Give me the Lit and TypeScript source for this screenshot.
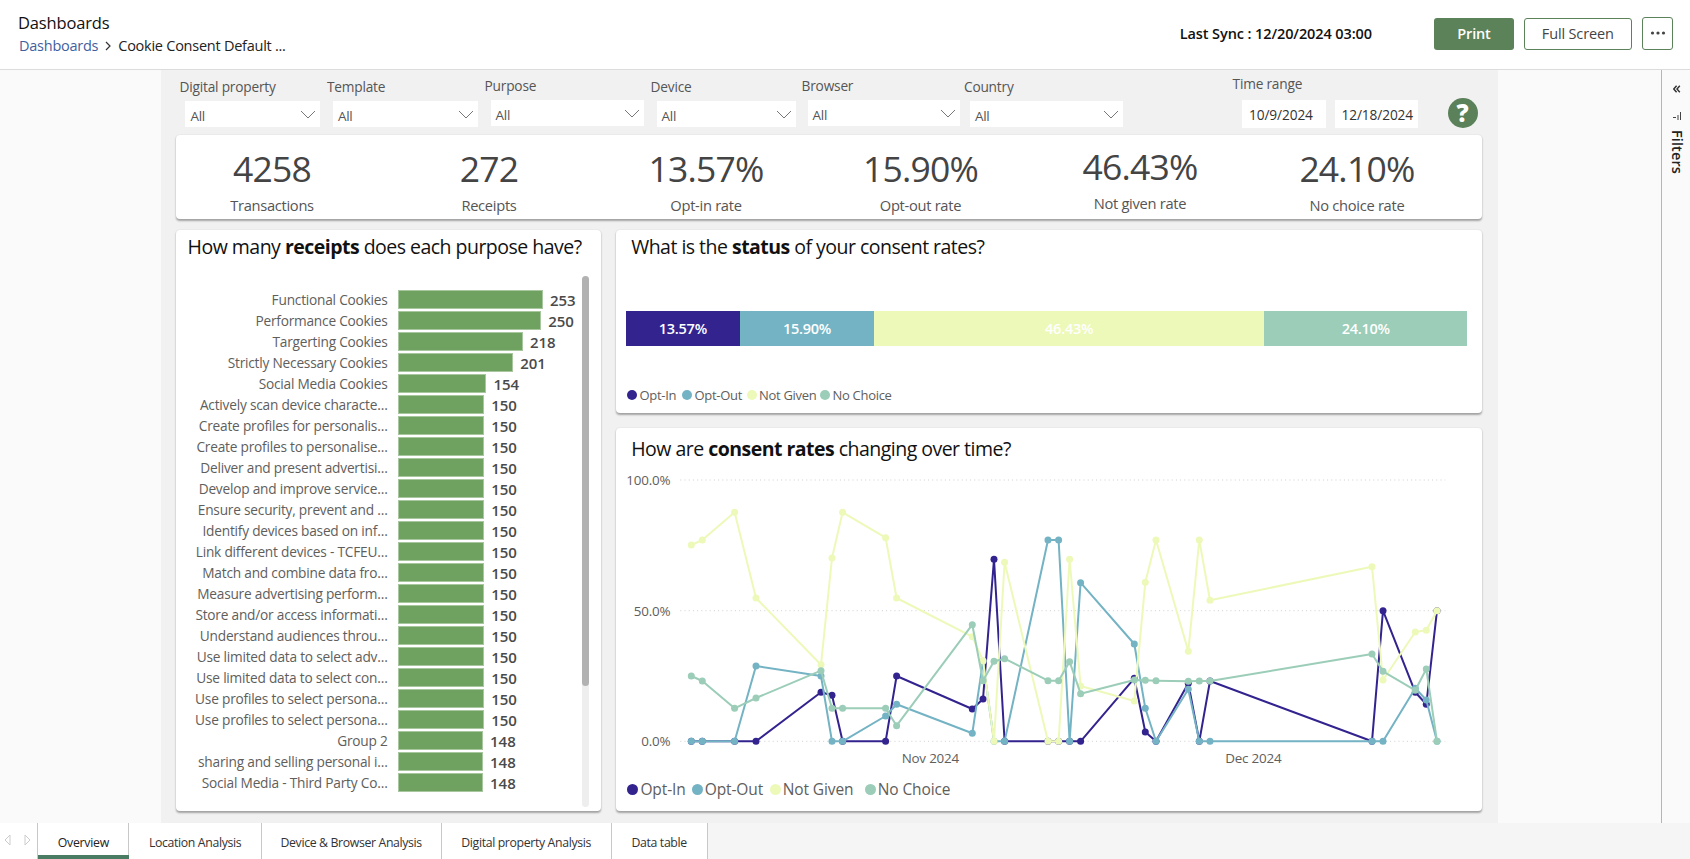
import { LitElement, html, css, svg } from "lit";
import { customElement } from "lit/decorators.js";

const filters = [
  { label: "Digital property", col: 147.5, w: 134.6, up: false },
  { label: "Template", col: 157.6, w: 144.6, up: false },
  { label: "Purpose", col: 166, w: 153, up: true },
  { label: "Device", col: 151, w: 139, up: false },
  { label: "Browser", col: 162.4, w: 152.5, up: true },
  { label: "Country", col: 268.6, w: 153, up: false },
];

const kpis = [
  { v: "4258", l: "Transactions", up: false },
  { v: "272", l: "Receipts", up: false },
  { v: "13.57%", l: "Opt-in rate", up: false },
  { v: "15.90%", l: "Opt-out rate", up: false },
  { v: "46.43%", l: "Not given rate", up: true },
  { v: "24.10%", l: "No choice rate", up: false },
];

const purposes: [string, number][] = [
  ["Functional Cookies", 253],
  ["Performance Cookies", 250],
  ["Targerting Cookies", 218],
  ["Strictly Necessary Cookies", 201],
  ["Social Media Cookies", 154],
  ["Actively scan device characte…", 150],
  ["Create profiles for personalis…", 150],
  ["Create profiles to personalise…", 150],
  ["Deliver and present advertisi…", 150],
  ["Develop and improve service…", 150],
  ["Ensure security, prevent and …", 150],
  ["Identify devices based on inf…", 150],
  ["Link different devices - TCFEU…", 150],
  ["Match and combine data fro…", 150],
  ["Measure advertising perform…", 150],
  ["Store and/or access informati…", 150],
  ["Understand audiences throu…", 150],
  ["Use limited data to select adv…", 150],
  ["Use limited data to select con…", 150],
  ["Use profiles to select persona…", 150],
  ["Use profiles to select persona…", 150],
  ["Group 2", 148],
  ["sharing and selling personal i…", 148],
  ["Social Media - Third Party Co…", 148],
];

const DARK = "#32238f";
const BLUE = "#74b3c4";
const YEL = "#edf9b9";
const GRN = "#9bcdb8";

const status = [
  { t: "13.57%", w: 114.7, c: DARK },
  { t: "15.90%", w: 133.7, c: BLUE },
  { t: "46.43%", w: 390.6, c: YEL },
  { t: "24.10%", w: 202.7, c: GRN },
];

const legend = [
  { t: "Opt-In", c: DARK, w1: 55, w2: 64.3 },
  { t: "Opt-Out", c: BLUE, w1: 64.5, w2: 78 },
  { t: "Not Given", c: YEL, w1: 73.5, w2: 95 },
  { t: "No Choice", c: GRN, w1: 80, w2: 90 },
];

const xs = [691, 702, 734.3, 755.7, 820.7, 831.7, 842.3, 885.3, 896.3, 972, 982.7, 993.7, 1004.3, 1047.7, 1058.3, 1069.3, 1080.3, 1134, 1145, 1155.7, 1188, 1199, 1209.7, 1371.7, 1382.7, 1415, 1426, 1436.7];
const series: { c: string; z: number[] }[] = [
  { c: DARK, z: [844, 844, 844, 844, 697, 706, 844, 844, 648, 747, 717, 298, 844, 844, 844, 844, 844, 655, 816, 844, 670, 844, 663, 844, 452, 697, 733, 452] },
  { c: BLUE, z: [844, 844, 844, 618, 648, 844, 844, 768, 733, 820, 604, 844, 844, 240, 240, 844, 368, 552, 745, 844, 688, 844, 844, 844, 844, 685, 720, 844] },
  { c: YEL, z: [255, 240, 157, 414, 614, 294, 157, 233, 414, 530, 602, 844, 307, 844, 844, 298, 678, 723, 367, 240, 574, 240, 421, 320, 660, 516, 511, 452] },
  { c: GRN, z: [648, 663, 745, 714, 632, 745, 745, 745, 797, 494, 662, 604, 596, 662, 662, 605, 701, 660, 661, 662, 664, 663, 663, 582, 634, 691, 627, 844] },
];
const yOf = (z: number) => 460 + z / 3;

const tabs = ["Overview", "Location Analysis", "Device & Browser Analysis", "Digital property Analysis", "Data table"];
const tabW = [92.1, 132.4, 179.8, 170.1, 96];

@customElement("app-root")
export class AppRoot extends LitElement {
  static styles = css`
    :host {
      display: flex;
      flex-direction: column;
      width: 1690px;
      height: 859px;
      overflow: hidden;
      background: #fafafa;
      font-family: "Open Sans", "Noto Sans", sans-serif;
      color: #252423;
      letter-spacing: -0.3px;
    }
    header {
      flex: 0 0 70px;
      box-sizing: border-box;
      height: 70px;
      background: #fff;
      border-bottom: 1.5px solid #dcdcdc;
      display: flex;
      align-items: flex-start;
      padding: 0 17px 0 18px;
    }
    .crumbs { padding-top: 12px; flex: 1; }
    .h-title { font-size: 16.5px; line-height: 22px; font-weight: 500; color: #111; letter-spacing: -0.15px; }
    .trail { display: flex; align-items: center; font-size: 14.5px; line-height: 22px; margin-top: 1px; color: #222; padding-left: 1px; letter-spacing: -0.25px; }
    .trail a { color: #3f5f9e; font-weight: 500; }
    .trail svg { margin: 0 7px 0 7px; }
    .sync { font-size: 14.5px; font-weight: 600; color: #111; line-height: 20px; margin: 24px 62px 0 0; letter-spacing: -0.1px; }
    .btn { box-sizing: border-box; height: 32px; border-radius: 3px; display: flex; align-items: center; justify-content: center; font-size: 14.5px; margin-top: 18px; padding-bottom: 2px; letter-spacing: -0.15px; }
    .print { width: 80px; background: #5b8259; color: #fff; font-weight: 600; margin-right: 10px; }
    .full { width: 107.5px; border: 1px solid #5b8259; color: #444; background: #fff; font-weight: 500; margin-right: 10.5px; }
    .more { width: 31px; height: 33px; margin-top: 17px; border: 1px solid #5b8259; background: #fff; }
    .body { flex: 1; display: flex; min-height: 0; }
    .gutter { flex: 0 0 161px; }
    .content { flex: 0 0 1337px; background: #f1f1f1; box-sizing: border-box; padding-left: 15.3px; }
    .pane { margin-left: 162.5px; flex: 1; border-left: 1px solid #b5b5b5; background: #fafafa; display: flex; flex-direction: column; align-items: center; padding: 15px 0 0 2px; box-sizing: border-box; }
    .pane svg { display: block; }
    .pane .ftxt { writing-mode: vertical-rl; font-size: 14.5px; font-weight: 600; color: #222; margin-top: 9px; letter-spacing: 0.1px; line-height: 16px; }
    .pane .fi { margin-top: 18px; }
    .frow { height: 65px; display: flex; margin-left: 3.2px; align-items: flex-start; }
    .f { display: flex; flex-direction: column; padding-top: 7px; box-sizing: border-box; flex: none; }
    .f.up { padding-top: 6px; }
    .f label { font-size: 13.7px; line-height: 20px; color: #555; letter-spacing: -0.2px; }
    .dd { box-sizing: border-box; height: 26px; margin: 4px 0 0 6px; background: #fff; font-size: 13.5px; color: #555; display: flex; align-items: center; justify-content: space-between; padding: 3px 4px 0 5px; }
    .dd svg { margin-top: -3px; }
    .time { margin-left: 0; padding-top: 2px; flex: none; }
    .time label { font-size: 13.7px; line-height: 20px; color: #555; letter-spacing: -0.2px; }
    .dates { display: flex; gap: 9px; margin: 6px 0 0 9.5px; }
    .date { box-sizing: border-box; width: 83.5px; height: 28px; background: #fff; display: flex; align-items: center; padding-left: 7px; font-size: 13.7px; color: #333; letter-spacing: -0.12px; }
    .help { flex: none; width: 30px; height: 30px; border-radius: 50%; background: #5a8159; color: #fff; font-weight: 800; font-size: 24px; line-height: 30px; text-align: center; margin: 28px 0 0 29.5px; letter-spacing: 0; }
    .card { background: #fff; border-radius: 4px; box-shadow: 0 1.5px 2px rgba(0,0,0,.32), 0 0 2px rgba(0,0,0,.05); box-sizing: border-box; }
    .kpi { width: 1305.5px; height: 84px; display: grid; grid-template-columns: repeat(6, 191.4px); column-gap: 25.6px; }
    .k { display: flex; flex-direction: column; align-items: center; padding-top: 10px; }
    .k.up { padding-top: 8px; }
    .k:nth-child(4) { margin-left: -5px; }
    .k .v { font-size: 35.5px; line-height: 46px; color: #444; letter-spacing: -0.8px; }
    .k .l { font-size: 14.7px; line-height: 20px; color: #555; margin-top: 4px; }
    .charts { display: grid; grid-template-columns: 425px 866px; column-gap: 14.6px; margin-top: 11px; }
    .left { height: 581px; position: relative; padding: 0 0 0 11.3px; }
    .ttl { font-size: 19.5px; line-height: 26px; color: #111; letter-spacing: -0.52px; }
    .ttl b { font-weight: 700; }
    .left .ttl { padding-top: 4px; height: 58.6px; box-sizing: border-box; }
    .rows { display: flex; flex-direction: column; }
    .row { display: grid; grid-template-columns: 200px 1fr; column-gap: 10px; height: 21px; align-items: center; }
    .row .lb { text-align: right; font-size: 13.7px; color: #605e5c; white-space: nowrap; line-height: 21px; letter-spacing: -0.22px; padding-bottom: 1px; box-sizing: border-box; }
    .row .bv { display: flex; align-items: center; gap: 7.2px; }
    .bar { height: 19px; background: #6fa260; box-sizing: border-box; border: 1px solid #a9c79f; }
    .val { font-size: 15px; font-weight: 600; color: #4a4a4a; letter-spacing: -0.05px; }
    .track { position: absolute; left: 405.5px; top: 46px; bottom: 4px; width: 7.5px; background: #eee; border-radius: 4px; }
    .thumb { height: 410px; background: #b2b2b2; border-radius: 4px; }
    .rcol { display: flex; flex-direction: column; gap: 15.4px; }
    .st { height: 183px; padding: 4px 0 0 15.3px; }
    .st .ttl { height: 77px; }
    .stack { display: flex; height: 35.3px; margin-left: -5.7px; }
    .seg { display: flex; align-items: center; justify-content: center; color: #fff; font-size: 14.5px; font-weight: 600; letter-spacing: -0.25px; }
    .lg { display: flex; align-items: center; }
    .lg .it { display: flex; align-items: center; flex: none; white-space: nowrap; }
    .lg i { display: block; border-radius: 50%; flex: none; }
    .lg1 { margin: 39px 0 0 -4.2px; font-size: 13px; color: #605e5c; line-height: 20px; letter-spacing: -0.3px; }
    .lg1 i { width: 10px; height: 10px; margin-right: 2.5px; }
    .lc { height: 383px; padding: 8px 0 0 0; }
    .lc .ttl { padding-left: 15.3px; height: 34px; }
    .lc svg.chart { display: block; width: 866px; height: 300px; }
    .lg2 { margin: 9px 0 0 11.5px; font-size: 15.5px; color: #605e5c; line-height: 20px; letter-spacing: -0.1px; }
    .lg2 i { width: 11px; height: 11px; margin-right: 2px; }
    .chart text { font-family: "Open Sans", "Noto Sans", sans-serif; font-size: 13.4px; fill: #605e5c; letter-spacing: -0.2px; }
    footer { flex: 0 0 36px; display: flex; background: #fff; height: 36px; }
    .nav { width: 37.3px; flex: none; display: flex; align-items: center; justify-content: space-between; padding: 0 6px 3px 4px; box-sizing: border-box; }
    .tab { flex: none; box-sizing: border-box; border-right: 1px solid #c8c8c8; display: flex; align-items: center; justify-content: center; font-size: 12.3px; color: #333; padding-top: 3px; letter-spacing: -0.36px; background: #fff; }
    .tab.on { border-left: 1px solid #c8c8c8; position: relative; font-weight: 500; color: #222; letter-spacing: -0.25px; }
    .tab.on::after { content: ""; position: absolute; left: 0; right: -1px; bottom: 0; height: 4px; background: #4a7c63; }
    .rest { flex: 1; background: #f5f5f5; }
  `;

  private chevron() {
    return html`<svg width="16" height="9" viewBox="0 0 16 9"><path d="M1 1 L8 8 L15 1" fill="none" stroke="#777" stroke-width="1"/></svg>`;
  }

  render() {
    return html`
      <header>
        <div class="crumbs">
          <div class="h-title">Dashboards</div>
          <div class="trail"><a>Dashboards</a><svg width="6" height="10" viewBox="0 0 6 10"><path d="M1 1 L5 5 L1 9" fill="none" stroke="#333" stroke-width="1.2"/></svg><span>Cookie Consent Default ...</span></div>
        </div>
        <div class="sync">Last Sync : 12/20/2024 03:00</div>
        <div class="btn print">Print</div>
        <div class="btn full">Full Screen</div>
        <div class="btn more"><svg width="16" height="4" viewBox="0 0 16 4"><circle cx="2.5" cy="2" r="1.6" fill="#444"/><circle cx="8" cy="2" r="1.6" fill="#444"/><circle cx="13.5" cy="2" r="1.6" fill="#444"/></svg></div>
      </header>
      <div class="body">
        <div class="gutter"></div>
        <div class="content">
          <div class="frow">
            ${filters.map(
              (f) => html`<div class="f ${f.up ? "up" : ""}" style="width:${f.col}px">
                <label>${f.label}</label>
                <div class="dd" style="width:${f.w}px"><span>All</span>${this.chevron()}</div>
              </div>`
            )}
            <div class="time">
              <label>Time range</label>
              <div class="dates"><div class="date">10/9/2024</div><div class="date">12/18/2024</div></div>
            </div>
            <div class="help">?</div>
          </div>
          <div class="card kpi">
            ${kpis.map(
              (k) => html`<div class="k ${k.up ? "up" : ""}"><div class="v">${k.v}</div><div class="l">${k.l}</div></div>`
            )}
          </div>
          <div class="charts">
            <div class="card left">
              <div class="ttl">How many <b>receipts</b> does each purpose have?</div>
              <div class="rows">
                ${purposes.map(
                  ([n, v]) => html`<div class="row">
                    <div class="lb">${n}</div>
                    <div class="bv"><div class="bar" style="width:${(v * 0.5708 + 0.8).toFixed(1)}px"></div><div class="val">${v}</div></div>
                  </div>`
                )}
              </div>
              <div class="track"><div class="thumb"></div></div>
            </div>
            <div class="rcol">
              <div class="card st">
                <div class="ttl">What is the <b>status</b> of your consent rates?</div>
                <div class="stack">
                  ${status.map((s) => html`<div class="seg" style="width:${s.w}px;background:${s.c}">${s.t}</div>`)}
                </div>
                <div class="lg lg1">
                  ${legend.map((l) => html`<div class="it" style="width:${l.w1}px"><i style="background:${l.c}"></i><span>${l.t}</span></div>`)}
                </div>
              </div>
              <div class="card lc">
                <div class="ttl">How are <b>consent rates</b> changing over time?</div>
                <svg class="chart" viewBox="615.7 470 866 300">
                  ${[480, 610.7, 741.3].map(
                    (y) => svg`<line x1="680" x2="1445" y1=${y} y2=${y} stroke="#cfcfcf" stroke-width="1" stroke-dasharray="1 3.2"/>`
                  )}
                  <text x="670" y="484.5" text-anchor="end">100.0%</text>
                  <text x="670" y="615.5" text-anchor="end">50.0%</text>
                  <text x="670" y="745.5" text-anchor="end">0.0%</text>
                  <text x="930" y="762.5" text-anchor="middle">Nov 2024</text>
                  <text x="1253" y="762.5" text-anchor="middle">Dec 2024</text>
                  ${series.map(
                    (s) => svg`
                      <polyline fill="none" stroke=${s.c} stroke-width="2" stroke-linejoin="round" points=${s.z.map((z, i) => `${xs[i]},${yOf(z).toFixed(1)}`).join(" ")}/>
                      ${s.z.map((z, i) => svg`<circle cx=${xs[i]} cy=${yOf(z).toFixed(1)} r="3.5" fill=${s.c}/>`)}
                    `
                  )}
                </svg>
                <div class="lg lg2">
                  ${legend.map((l) => html`<div class="it" style="width:${l.w2}px"><i style="background:${l.c}"></i><span>${l.t}</span></div>`)}
                </div>
              </div>
            </div>
          </div>
        </div>
        <div class="pane">
          <svg width="8" height="8" viewBox="0 0 10 10"><path d="M4.5 1 L1 5 L4.5 9 M8.5 1 L5 5 L8.5 9" fill="none" stroke="#333" stroke-width="1.8"/></svg>
          <svg class="fi" width="10" height="10" viewBox="0 0 10 10"><path d="M1 6.5 H4 M6 4 V9 M8.5 1 V9" fill="none" stroke="#444" stroke-width="1"/></svg>
          <div class="ftxt">Filters</div>
        </div>
      </div>
      <footer>
        <div class="nav">
          <svg width="7" height="12" viewBox="0 0 7 12"><path d="M6 1 L1 6 L6 11 Z" fill="none" stroke="#ccc"/></svg>
          <svg width="7" height="12" viewBox="0 0 7 12"><path d="M1 1 L6 6 L1 11 Z" fill="none" stroke="#ccc"/></svg>
        </div>
        ${tabs.map((t, i) => html`<div class="tab ${i === 0 ? "on" : ""}" style="width:${tabW[i]}px">${t}</div>`)}
        <div class="rest"></div>
      </footer>
    `;
  }
}
